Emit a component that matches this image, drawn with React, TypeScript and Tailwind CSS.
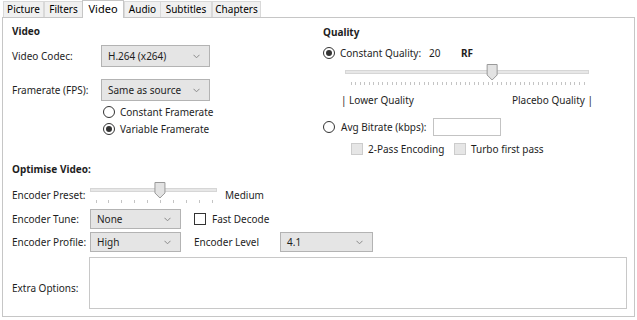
import React from "react";

const TABS = ["Picture", "Filters", "Video", "Audio", "Subtitles", "Chapters"];
const TAB_W = ["w-[41px]", "w-[38px]", "w-[42px]", "w-[36px]", "w-[52px]", "w-[49px]"];

function Chevron() {
  return (
    <svg width="7" height="5" viewBox="0 0 7 5" className="shrink-0">
      <path d="M0.5 0.8 L3.5 3.8 L6.5 0.8" fill="none" stroke="#8a8a8a" strokeWidth="1" />
    </svg>
  );
}

function Select({ value, className }: { value: string; className: string }) {
  return (
    <div
      className={`flex items-center justify-between border border-[#b3b3b3] bg-[#e5e5e5] pl-[6px] pr-[9px] ${className}`}
    >
      <span>{value}</span>
      <Chevron />
    </div>
  );
}

function Radio({ checked }: { checked?: boolean }) {
  return (
    <div className="flex h-[12px] w-[12px] shrink-0 items-center justify-center rounded-full border border-[#333] bg-white">
      {checked && <div className="h-[6px] w-[6px] rounded-full bg-[#333]" />}
    </div>
  );
}

function Check({ disabled }: { disabled?: boolean }) {
  return (
    <div
      className={
        disabled
          ? "h-[12px] w-[12px] shrink-0 border border-[#cccccc] bg-[#e6e6e6]"
          : "h-[12px] w-[12px] shrink-0 border border-[#333] bg-white"
      }
    />
  );
}

// horizontal trackbar with ticks underneath, thumb pointing down
function Slider({ width, ticks, value }: { width: number; ticks: number; value: number }) {
  const inset = 5.5;
  const span = width - inset * 2;
  const thumbX = inset + (span * value) / (ticks - 1);
  return (
    <svg width={width} height={24} className="shrink-0">
      <rect x="0.5" y="6.5" width={width - 1} height="3" fill="#e7e7e7" stroke="#d6d6d6" />
      {Array.from({ length: ticks }).map((_, i) => {
        const x = Math.round(inset + (span * i) / (ticks - 1)) + 0.5;
        return <line key={i} x1={x} x2={x} y1={18} y2={21} stroke="#c4c4c4" strokeWidth="1" />;
      })}
      <path
        d={`M${thumbX - 5} 0.5 H${thumbX + 5} V11 L${thumbX} 16 L${thumbX - 5} 11 Z`}
        fill="#e3e3e3"
        stroke="#9a9a9a"
        strokeWidth="1"
      />
    </svg>
  );
}

export default function App() {
  return (
    <div className="h-[320px] w-[637px] overflow-hidden bg-white font-['Noto_Sans',sans-serif] text-[10px] text-[#1e1e1e]">
      {/* Tabs */}
      <div className="relative z-10 -mb-px flex h-[18px] items-start pl-[3px]">
        {TABS.map((t, i) =>
          t === "Video" ? (
            <div
              key={t}
              className={`flex h-[18px] items-center justify-center border border-b-0 border-[#c6c6c6] bg-white text-[11px] text-black ${TAB_W[i]}`}
            >
              {t}
            </div>
          ) : (
            <div
              key={t}
              className={`mt-px flex h-[16px] items-center justify-center border border-b-0 border-[#d9d9d9] bg-[#f0f0f0] text-black ${TAB_W[i]} ${i === 1 || i === 3 ? "border-r-0" : ""}`}
            >
              {t}
            </div>
          )
        )}
      </div>

      {/* Panel */}
      <div className="ml-[2px] h-[300px] w-[633px] border border-[#c6c6c6] pl-[9px]">
        <div className="flex h-[144px]">
          {/* Video */}
          <div className="w-[311px] pt-[6px]">
            <div className="h-[14px] font-bold leading-[14px]">Video</div>
            <div className="mt-[7px] flex h-[22px] items-center">
              <span className="w-[89px]">Video Codec:</span>
              <Select value="H.264 (x264)" className="h-[22px] w-[109px]" />
            </div>
            <div className="mt-[12px] flex h-[22px] items-center">
              <span className="w-[89px]">Framerate (FPS):</span>
              <Select value="Same as source" className="h-[22px] w-[109px]" />
            </div>
            <div className="ml-[91px] mt-[4px] flex h-[14px] items-center gap-[5px]">
              <Radio />
              <span>Constant Framerate</span>
            </div>
            <div className="ml-[91px] mt-[3px] flex h-[14px] items-center gap-[5px]">
              <Radio checked />
              <span>Variable Framerate</span>
            </div>
          </div>

          {/* Quality */}
          <div className="flex-1 pt-[7px]">
            <div className="h-[14px] font-bold leading-[14px]">Quality</div>
            <div className="mt-[7px] flex h-[14px] items-center">
              <Radio checked />
              <span className="ml-[5px] w-[89px]">Constant Quality:</span>
              <span className="w-[32px]">20</span>
              <span className="font-bold">RF</span>
            </div>
            <div className="ml-[22px] mt-[4px]">
              <Slider width={244} ticks={52} value={31} />
            </div>
            <div className="ml-[18px] mt-[5px] flex h-[14px] w-[252px] items-center justify-between">
              <span>| Lower Quality</span>
              <span>Placebo Quality |</span>
            </div>
            <div className="mt-[11px] flex h-[18px] items-center">
              <Radio />
              <span className="ml-[6px] w-[92px]">Avg Bitrate (kbps):</span>
              <div className="h-[18px] w-[68px] border border-[#c3c3c3] bg-white" />
            </div>
            <div className="ml-[28px] mt-[7px] flex h-[12px] items-center">
              <Check disabled />
              <span className="ml-[5px] w-[86px]">2-Pass Encoding</span>
              <Check disabled />
              <span className="ml-[5px]">Turbo first pass</span>
            </div>
          </div>
        </div>

        {/* Optimise */}
        <div className="h-[14px] font-bold leading-[14px]">Optimise Video:</div>
        <div className="mt-[6px] flex h-[24px] items-center">
          <span className="w-[78px] pt-[2px]">Encoder Preset:</span>
          <Slider width={127} ticks={10} value={5} />
          <span className="ml-[8px] pt-[2px]">Medium</span>
        </div>
        <div className="mt-[3px] flex h-[20px] items-center">
          <span className="w-[78px]">Encoder Tune:</span>
          <Select value="None" className="h-[20px] w-[91px]" />
          <div className="ml-[13px]">
            <Check />
          </div>
          <span className="ml-[6px]">Fast Decode</span>
        </div>
        <div className="mt-[3px] flex h-[20px] items-center">
          <span className="w-[78px]">Encoder Profile:</span>
          <Select value="High" className="h-[20px] w-[91px]" />
          <span className="ml-[13px] w-[86px]">Encoder Level</span>
          <Select value="4.1" className="h-[20px] w-[93px]" />
        </div>
        <div className="mt-[5px] flex h-[52px] items-center">
          <span className="w-[77px] pt-[10px]">Extra Options:</span>
          <div className="h-[52px] w-[538px] border border-[#c8c8c8] bg-white" />
        </div>
      </div>
    </div>
  );
}
